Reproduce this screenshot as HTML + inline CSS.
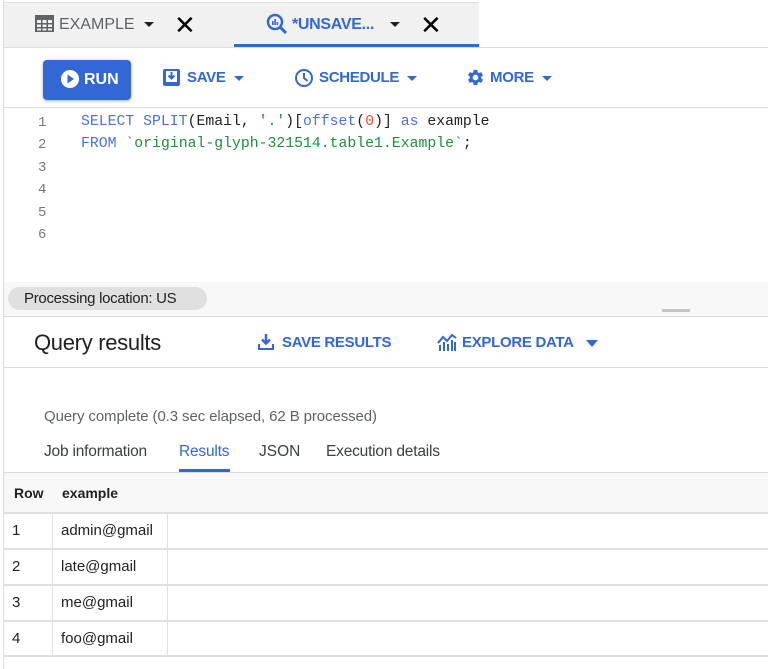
<!DOCTYPE html>
<html><head><style>
*{margin:0;padding:0;box-sizing:border-box}
body{width:768px;height:669px;overflow:hidden;background:#fff;font-family:"Liberation Sans",sans-serif;position:relative;color:#202124}
.a{position:absolute;white-space:nowrap}
.c{font-family:"Liberation Mono",monospace;font-size:14.8px}
.blue{color:#3367d6}
.tb{font-size:15px;font-weight:bold;color:#3367d6;letter-spacing:-0.3px}
.tri{display:inline-block;width:0;height:0;border-left:5px solid transparent;border-right:5px solid transparent;border-top:5px solid currentColor;vertical-align:middle;margin-left:8px}
.hl{position:absolute;left:3px;right:0;height:1px;background:#dadce0}
.vl{position:absolute;width:1px;background:#e0e0e0}
</style></head><body>
<div class="a" style="left:3px;top:0;width:1px;height:669px;background:#dadce0"></div>
<div class="a" style="left:4px;top:2px;width:764px;height:45px;background:#f1f1f1;border-top:1px solid #e0e0e0"></div>
<div class="a" style="left:479px;top:2px;width:289px;height:45px;background:#fff"></div>
<div class="hl" style="top:47px"></div>
<svg class="a" style="left:35px;top:15px" width="19" height="17" viewBox="0 0 19 17"><rect x="0" y="0" width="19" height="17" fill="#5f6368"/><g fill="#f1f1f1"><rect x="2" y="5" width="4" height="3"/><rect x="7.5" y="5" width="4" height="3"/><rect x="13" y="5" width="4" height="3"/><rect x="2" y="9.5" width="4" height="2.5"/><rect x="7.5" y="9.5" width="4" height="2.5"/><rect x="13" y="9.5" width="4" height="2.5"/><rect x="2" y="13.5" width="4" height="2"/><rect x="7.5" y="13.5" width="4" height="2"/><rect x="13" y="13.5" width="4" height="2"/></g></svg>
<div class="a" style="left:59px;top:16px;font-size:16px;color:#5f6368">EXAMPLE</div>
<div class="a" style="left:144px;top:16px;color:#202124"><span class="tri" style="margin:0"></span></div>
<div class="a" style="left:174px;top:10px;font-size:26px;color:#000">✕</div>
<svg class="a" style="left:266px;top:13px" width="22" height="22" viewBox="0 0 22 22"><circle cx="9" cy="9" r="7" fill="none" stroke="#3367d6" stroke-width="2.5"/><line x1="14" y1="14" x2="20" y2="20" stroke="#3367d6" stroke-width="3"/><rect x="6" y="8" width="1.6" height="4" fill="#3367d6"/><rect x="8.3" y="6" width="1.6" height="6" fill="#3367d6"/><rect x="10.6" y="9" width="1.6" height="3" fill="#3367d6"/></svg>
<div class="a blue" style="left:292px;top:16px;font-size:16px;font-weight:bold;letter-spacing:-0.3px">*UNSAVE...</div>
<div class="a" style="left:390px;top:16px;color:#202124"><span class="tri" style="margin:0"></span></div>
<div class="a" style="left:420px;top:10px;font-size:26px;color:#000">✕</div>
<div class="a" style="left:234px;top:44px;width:245px;height:3px;background:#3367d6"></div>
<div class="a" style="left:43px;top:60px;width:88px;height:40px;background:#3367d6;border-radius:4px;box-shadow:0 1px 3px rgba(0,0,0,.35)"></div>
<svg class="a" style="left:60px;top:69px" width="20" height="20" viewBox="0 0 20 20"><circle cx="10" cy="10" r="9" fill="#fff"/><path d="M7.5 5.5L14 10L7.5 14.5Z" fill="#3367d6"/></svg>
<div class="a" style="left:84px;top:71px;font-size:16px;font-weight:bold;color:#fff">RUN</div>
<svg class="a" style="left:162px;top:68px" width="19" height="19" viewBox="0 0 19 19"><rect x="1" y="1" width="17" height="17" rx="2" fill="#3367d6"/><rect x="4" y="3" width="11" height="11" fill="#fff"/><path d="M9.5 4v6M6.5 7.5l3 3 3-3" stroke="#3367d6" stroke-width="2" fill="none"/></svg>
<div class="a tb" style="left:187px;top:69px">SAVE<span class="tri"></span></div>
<svg class="a" style="left:294px;top:68px" width="20" height="20" viewBox="0 0 20 20"><circle cx="10" cy="10" r="8" fill="none" stroke="#3367d6" stroke-width="2"/><path d="M10 5v5l3.5 3" stroke="#3367d6" stroke-width="2" fill="none"/></svg>
<div class="a tb" style="left:319px;top:69px">SCHEDULE<span class="tri"></span></div>
<svg class="a" style="left:466px;top:68px" width="19" height="19" viewBox="0 0 24 24"><path fill="#3367d6" d="M19.14 12.94c.04-.3.06-.61.06-.94s-.02-.64-.07-.94l2.03-1.58a.49.49 0 0 0 .12-.61l-1.92-3.32a.49.49 0 0 0-.59-.22l-2.39.96c-.5-.38-1.03-.7-1.62-.94l-.36-2.54a.48.48 0 0 0-.48-.41h-3.84a.48.48 0 0 0-.48.41l-.36 2.54c-.59.24-1.13.57-1.62.94l-2.39-.96a.48.48 0 0 0-.59.22L2.74 8.87a.47.47 0 0 0 .12.61l2.03 1.58c-.05.3-.09.63-.09.94s.02.64.07.94l-2.03 1.58a.49.49 0 0 0-.12.61l1.92 3.32c.12.22.37.29.59.22l2.39-.96c.5.38 1.03.7 1.62.94l.36 2.54c.05.24.24.41.48.41h3.84c.24 0 .44-.17.47-.41l.36-2.54c.59-.24 1.13-.56 1.62-.94l2.39.96c.22.08.47 0 .59-.22l1.92-3.32a.47.47 0 0 0-.12-.61l-2.01-1.58zM12 15.6A3.6 3.6 0 1 1 12 8.4a3.6 3.6 0 0 1 0 7.2z"/></svg>
<div class="a tb" style="left:490px;top:69px">MORE<span class="tri"></span></div>
<div class="hl" style="top:107px"></div>
<div class="a c" style="left:38px;top:112px;line-height:22.4px;color:#777;font-size:14px">1<br>2<br>3<br>4<br>5<br>6</div>
<div class="a c" style="left:81px;top:111px;line-height:22.4px;color:#202124"><span style="color:#4a73d6">SELECT SPLIT</span>(Email, <span style="color:#1e8e3e">'.'</span>)[<span style="color:#4a73d6">offset</span>(<span style="color:#f4511e">0</span>)] <span style="color:#4a73d6">as</span> example<br><span style="color:#4a73d6">FROM</span> <span style="color:#1e8e3e">`original-glyph-321514.table1.Example`</span>;</div>
<div class="a" style="left:4px;top:282px;width:764px;height:34px;background:#f8f8f8"></div>
<div class="a" style="left:8px;top:287px;width:199px;height:23px;background:#e0e0e0;border-radius:12px"></div>
<div class="a" style="left:24px;top:290px;font-size:15px;color:#202124;letter-spacing:-0.3px">Processing location: US</div>
<div class="a" style="left:662px;top:309px;width:28px;height:3px;background:#c4c4c4"></div>
<div class="hl" style="top:316px"></div>
<div class="a" style="left:34px;top:330px;font-size:22px;color:#202124;letter-spacing:-0.3px">Query results</div>
<svg class="a" style="left:258px;top:333px" width="16" height="17" viewBox="0 0 16 17"><path d="M8 1v9M4 6.5l4 4 4-4" stroke="#3367d6" stroke-width="2.5" fill="none"/><path d="M1 11v5h14v-5" stroke="#3367d6" stroke-width="2" fill="none"/></svg>
<div class="a tb" style="left:282px;top:334px">SAVE RESULTS</div>
<svg class="a" style="left:437px;top:333px" width="20" height="18" viewBox="0 0 20 18"><path d="M1 10l5-6 4 4 5-6 4 3" stroke="#3367d6" stroke-width="2" fill="none"/><g fill="#3367d6"><rect x="2" y="12" width="2" height="6"/><rect x="6" y="9" width="2" height="9"/><rect x="10" y="11" width="2" height="7"/><rect x="14" y="7" width="2" height="11"/><rect x="17" y="9" width="2" height="9"/></g></svg>
<div class="a tb" style="left:462px;top:334px">EXPLORE DATA<span class="tri" style="margin-left:12px;border-left-width:6px;border-right-width:6px;border-top-width:7px"></span></div>
<div class="hl" style="top:367px"></div>
<div class="a" style="left:44px;top:408px;font-size:15px;color:#5f6368;letter-spacing:-0.1px">Query complete (0.3 sec elapsed, 62 B processed)</div>
<div class="a" style="left:44px;top:443px;font-size:15.5px;color:#3c4043;letter-spacing:-0.2px">Job information</div>
<div class="a blue" style="left:179px;top:443px;font-size:15.5px;letter-spacing:-0.2px">Results</div>
<div class="a" style="left:259px;top:443px;font-size:15.5px;color:#3c4043">JSON</div>
<div class="a" style="left:326px;top:443px;font-size:15.5px;color:#3c4043;letter-spacing:-0.2px">Execution details</div>
<div class="a" style="left:179px;top:469px;width:51px;height:3px;background:#3367d6"></div>
<div class="hl" style="top:472px"></div>
<div class="a" style="left:4px;top:473px;width:764px;height:39px;background:#f8f8f8"></div>
<div class="a" style="left:14px;top:485px;font-size:14px;font-weight:bold;color:#202124">Row</div>
<div class="a" style="left:62px;top:485px;font-size:14px;font-weight:bold;color:#202124">example</div>
<div class="hl" style="top:512px;background:#e0e0e0;height:2px"></div>
<div class="hl" style="top:548px;background:#e0e0e0;height:2px"></div>
<div class="hl" style="top:584px;background:#e0e0e0;height:2px"></div>
<div class="hl" style="top:620px;background:#e0e0e0;height:2px"></div>
<div class="hl" style="top:655px;background:#e0e0e0;height:2px"></div>
<div class="vl" style="left:52px;top:513px;height:143px"></div>
<div class="vl" style="left:167px;top:513px;height:143px"></div>
<div class="a" style="left:12px;top:522px;font-size:15px;line-height:36px;margin-top:-9px">1<br>2<br>3<br>4</div>
<div class="a" style="left:61px;top:522px;font-size:15px;line-height:36px;margin-top:-9px">admin@gmail<br>late@gmail<br>me@gmail<br>foo@gmail</div>
</body></html>
